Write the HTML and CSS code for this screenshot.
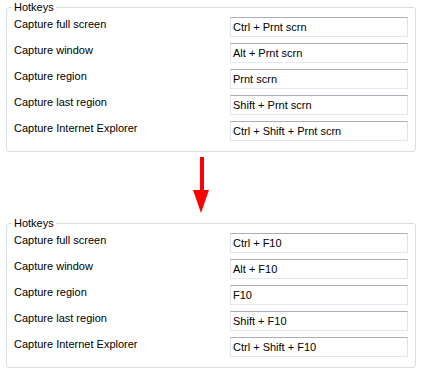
FILE: index.html
```html
<!DOCTYPE html>
<html lang="en">
<head>
    <meta charset="UTF-8">
    <title>Hotkeys</title>
    <link rel="stylesheet" href="styles.css">
</head>
<body>
    <div class="page">
        <fieldset class="hotkeys">
            <legend>Hotkeys</legend>
            <div class="row"><span class="label">Capture full screen</span><div class="key">Ctrl + Prnt scrn</div></div>
            <div class="row"><span class="label">Capture window</span><div class="key">Alt + Prnt scrn</div></div>
            <div class="row"><span class="label">Capture region</span><div class="key">Prnt scrn</div></div>
            <div class="row"><span class="label">Capture last region</span><div class="key">Shift + Prnt scrn</div></div>
            <div class="row"><span class="label">Capture Internet Explorer</span><div class="key">Ctrl + Shift + Prnt scrn</div></div>
        </fieldset>

        <div class="arrow">
            <svg width="16" height="56" viewBox="0 0 16 56">
                <rect x="7" y="0" width="4" height="34" fill="#ff0000"/>
                <polygon points="0,33 16,33 8,56" fill="#ff0000"/>
            </svg>
        </div>

        <fieldset class="hotkeys">
            <legend>Hotkeys</legend>
            <div class="row"><span class="label">Capture full screen</span><div class="key">Ctrl + F10</div></div>
            <div class="row"><span class="label">Capture window</span><div class="key">Alt + F10</div></div>
            <div class="row"><span class="label">Capture region</span><div class="key">F10</div></div>
            <div class="row"><span class="label">Capture last region</span><div class="key">Shift + F10</div></div>
            <div class="row"><span class="label">Capture Internet Explorer</span><div class="key">Ctrl + Shift + F10</div></div>
        </fieldset>
    </div>
</body>
</html>
```

FILE: styles.css
```css
* {
    margin: 0;
    padding: 0;
    box-sizing: border-box;
}

body {
    font-family: "Liberation Sans", Arial, sans-serif;
    font-size: 11px;
    line-height: 13px;
    color: #000;
    background: #fff;
}

.page {
    width: 423px;
    padding: 1px 7px 0 6px;
}

.hotkeys {
    border: 1px solid #d5dfe5;
    border-radius: 3px;
    padding: 3px 6px 10px 7px;
    display: flex;
    flex-direction: column;
    gap: 6px;
}

.hotkeys legend {
    padding: 0 2px;
    margin-left: -2px;
}

.row {
    display: flex;
    align-items: flex-start;
    height: 20px;
}

.label {
    width: 216px;
    padding-top: 1px;
}

.key {
    width: 178px;
    height: 20px;
    line-height: 18px;
    padding: 0 2px;
    border: 1px solid #e2e3ea;
    border-top-color: #abadb3;
    border-bottom-color: #e3e9ef;
    white-space: nowrap;
}

.arrow {
    height: 65px;
    padding: 5px 0 0 187px;
}

.arrow svg {
    display: block;
}
```
